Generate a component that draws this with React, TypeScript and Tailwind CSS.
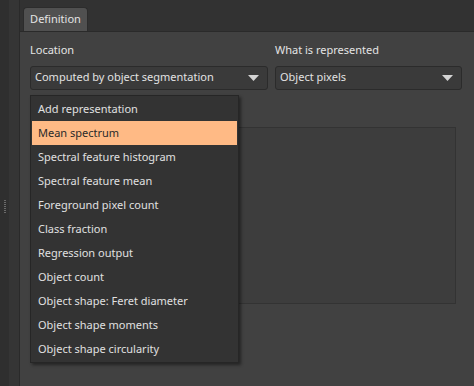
import React from "react";

const ITEMS = [
  "Add representation",
  "Mean spectrum",
  "Spectral feature histogram",
  "Spectral feature mean",
  "Foreground pixel count",
  "Class fraction",
  "Regression output",
  "Object count",
  "Object shape: Feret diameter",
  "Object shape moments",
  "Object shape circularity",
];

function Arrow() {
  return (
    <svg width="11" height="6" viewBox="0 0 11 6" className="shrink-0">
      <path d="M0 0 H11 L5.5 6 Z" fill="#d4d4d4" />
    </svg>
  );
}

function Combo({ label, className }: { label: string; className: string }) {
  return (
    <div
      className={`flex h-[24px] items-center justify-between rounded-[3px] border border-[#2b2b2b] bg-[#3a3a3a] pl-[4px] pr-[8px] text-[#e2e2e2] ${className}`}
    >
      <span>{label}</span>
      <Arrow />
    </div>
  );
}

export default function App() {
  const selected = 1;

  return (
    <div
      className="flex h-[386px] w-[474px] overflow-hidden bg-[#323232] text-[11px]"
      style={{ fontFamily: "'Noto Sans', 'Open Sans', sans-serif" }}
    >
      {/* splitter strip */}
      <div className="flex w-[9px] shrink-0 items-center justify-center bg-[#2f2f2f] pt-[26px]">
        <div className="flex flex-col gap-[1px]">
          {[0, 1, 2, 3, 4, 5, 6].map((i) => (
            <div key={i} className="h-[1px] w-[2px] bg-[#6a6a6a]" />
          ))}
        </div>
      </div>
      <div className="w-[11px] shrink-0 border-r border-[#2a2a2a] bg-[#353535]" />

      <div className="flex min-w-0 flex-1 flex-col">
        <div className="flex h-[31px] items-end pl-[3px]">
          <div className="flex h-[24px] w-[65px] items-center justify-center rounded-t-[4px] border border-b-0 border-[#2c2c2c] bg-[#505050] text-[12px] text-[#e4e4e4]">
            <span className="text-[11px]">Definition</span>
          </div>
        </div>

        <div className="relative flex-1 border-t border-[#2a2a2a] bg-[#414141] pl-[10px] pt-[10px]">
          <div className="flex gap-[7px]">
            <div className="flex w-[238px] flex-col gap-[7px]">
              <span className="text-[#e4e4e4]">Location</span>
              <Combo label="Computed by object segmentation" className="w-[238px]" />
            </div>
            <div className="flex w-[187px] flex-col gap-[7px]">
              <span className="text-[#e4e4e4]">What is represented</span>
              <Combo label="Object pixels" className="w-[187px]" />
            </div>
          </div>

          {/* group box behind popup */}
          <div className="mt-[37px] h-[177px] w-[426px] border border-[#333333] bg-[#3d3d3d]" />

          {/* popup list */}
          <div className="absolute left-[10px] top-[63px] w-[209px] border border-[#262626] bg-[#333333] py-[1px] shadow-[2px_2px_3px_rgba(0,0,0,0.45)]">
            {ITEMS.map((item, i) => (
              <div
                key={item}
                className={
                  i === selected
                    ? "mx-[1px] flex h-[24px] items-center bg-[#ffba85] pl-[6px] text-[#2a2a2a]"
                    : "mx-[1px] flex h-[24px] items-center pl-[6px] text-[#e0e0e0]"
                }
              >
                {item}
              </div>
            ))}
          </div>
        </div>
      </div>
    </div>
  );
}
